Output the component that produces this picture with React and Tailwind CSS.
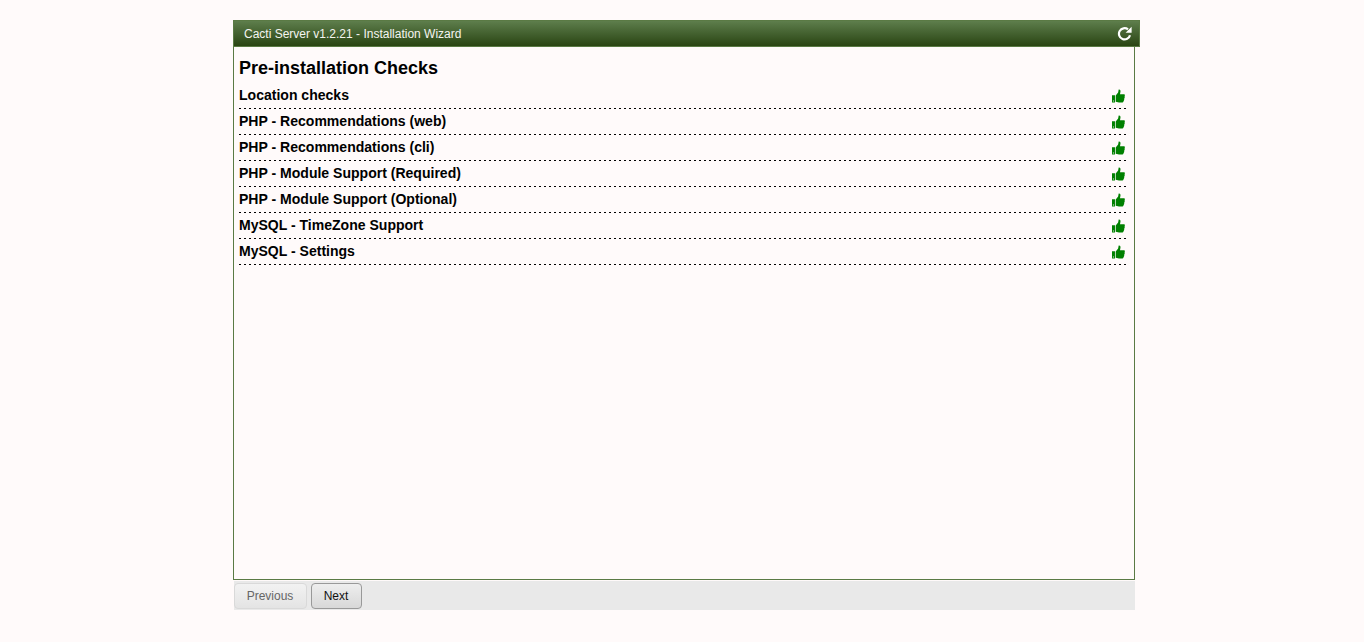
import React from "react";

const rows = [
  "Location checks",
  "PHP - Recommendations (web)",
  "PHP - Recommendations (cli)",
  "PHP - Module Support (Required)",
  "PHP - Module Support (Optional)",
  "MySQL - TimeZone Support",
  "MySQL - Settings",
];

function Thumb() {
  return (
    <svg width="14" height="14" viewBox="0 0 14 14" className="mt-[1px] h-[14px] w-[13px]" preserveAspectRatio="none">
      <path fillRule="evenodd" fill="#008000" d="M0 6.2h3.2V13.6H0zM1 11.4h1v1H1z" />
      <path fill="#008000" d="M4 6.4 6.6 3.6 7.2 0.6C8.6 0.2 9.3 1.4 9.1 2.8L8.6 5.2H12.8C13.9 5.2 14.1 6.4 13.6 7L13.7 8.4 13.2 9.6 13.1 11 12.4 12.2C12.2 13.2 11.6 13.6 10.8 13.6H8.6C7.2 13.6 5.8 12.8 4 12.7Z" />
    </svg>
  );
}

export default function App() {
  return (
    <div className="min-h-[642px] bg-[#fffafa] pt-5 pl-[233px] font-['Liberation_Sans',Arial,sans-serif] text-black">
      <div className="w-[907px]">
        <div className="flex h-[27px] items-center justify-between border border-[#5a7a44] bg-gradient-to-b from-[#5e7e4c] to-[#2a4512] pl-[10px] pr-[7px] text-[12px] text-[#f4f4f0]">
          <span>Cacti Server v1.2.21 - Installation Wizard</span>
          <svg width="15" height="15" viewBox="0 0 15 15" fill="none" stroke="#ffffff" strokeWidth="2.2">
            <path d="M13 9.2A5.6 5.6 0 1 1 11 3.4" />
            <path d="M14.6 0.8v6H8.6z" fill="#ffffff" stroke="none" />
          </svg>
        </div>
        <div className="h-[533px] w-[902px] border border-t-0 border-[#5a7a44] px-[5px]">
          <h1 className="pt-[9px] text-[18px] leading-[24px] font-bold">Pre-installation Checks</h1>
          <div className="mt-[3px]">
            {rows.map((r) => (
              <div key={r} className="flex h-[26px] flex-col">
                <div className="flex h-[25px] items-center justify-between pr-[4px] text-[14.04px] font-bold">
                  <span>{r}</span>
                  <Thumb />
                </div>
                <div className="h-px bg-[repeating-linear-gradient(90deg,#000_0,#000_2px,transparent_2px,transparent_5px)]" />
              </div>
            ))}
          </div>
        </div>
        <div className="mt-px ml-px flex h-[29px] w-[901px] items-center gap-1 bg-[#e9e9e9] pt-[1px]">
          <button className="h-[26px] w-[73px] rounded-[4px] border border-[#d9d9d9] bg-gradient-to-b from-[#f2f2f2] to-[#e4e4e4] pr-[1px] text-[12px] text-[#666666]">
            Previous
          </button>
          <button className="h-[26px] w-[51px] rounded-[4px] border border-[#999999] bg-gradient-to-b from-[#eeeeee] to-[#d8d8d8] pr-[1px] text-[12px] text-[#111]">
            Next
          </button>
        </div>
      </div>
    </div>
  );
}
